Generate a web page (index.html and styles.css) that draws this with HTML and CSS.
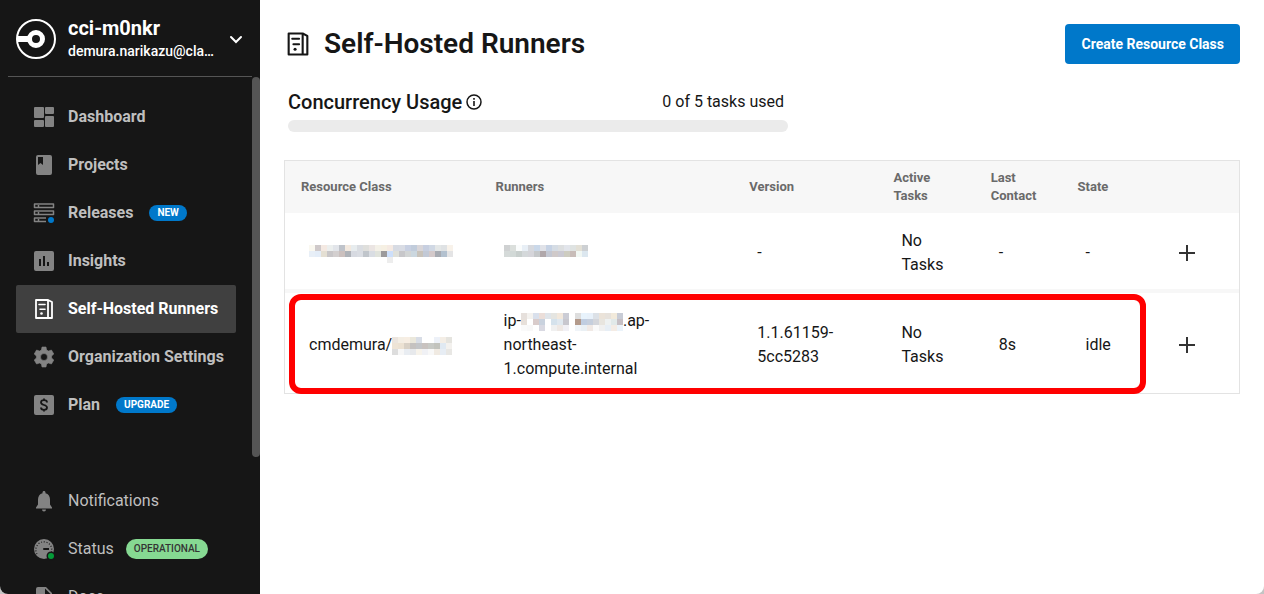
FILE: index.html
```html
<!DOCTYPE html>
<html lang="en">
<head>
  <meta charset="UTF-8">
  <meta name="viewport" content="width=device-width, initial-scale=1.0">
  <title>Self-Hosted Runners</title>
  <link rel="stylesheet" href="styles.css">
</head>
<body>
  <svg class="sprite" aria-hidden="true">
    <symbol id="icon-runner" viewBox="0 0 24 24">
      <path d="M4 3h12v18H4zM16 3l4 2v16h-4" fill="none" stroke="currentColor" stroke-width="1.800" stroke-linejoin="round"/>
      <path d="M7 7.500h6M8 12.200h5" fill="none" stroke="currentColor" stroke-width="1.600" stroke-linecap="round"/>
      <circle cx="9.500" cy="16.500" r="1.300" fill="currentColor"/>
    </symbol>
    <symbol id="icon-plus" viewBox="0 0 20 20">
      <path d="M10 2v16M2 10h16" fill="none" stroke="currentColor" stroke-width="2"/>
    </symbol>
  </svg>

  <div class="app">
    <aside class="sidebar">
      <button class="org">
        <svg class="org-logo" viewBox="0 0 40 40" aria-hidden="true">
          <circle cx="20" cy="20" r="19" fill="none" stroke="#fff" stroke-width="2"/>
          <circle cx="20" cy="20" r="6.500" fill="none" stroke="#fff" stroke-width="5"/>
          <path d="M1 17h11v6H1z" fill="#fff"/>
        </svg>
        <span class="org-text">
          <span class="org-name">cci-m0nkr</span>
          <span class="org-email">demura.narikazu@cla…</span>
        </span>
        <svg class="org-arrow" viewBox="0 0 16 16" aria-hidden="true"><path d="M3 6l5 5 5-5" fill="none" stroke="#fff" stroke-width="2" stroke-linecap="round"/></svg>
      </button>

      <div class="nav-wrap">
        <nav class="nav">
          <a href="#" class="nav-item">
            <svg class="icon" viewBox="0 0 24 24"><path fill="currentColor" d="M3 2h8a1 1 0 0 1 1 1v9a1 1 0 0 1-1 1H3a1 1 0 0 1-1-1V3a1 1 0 0 1 1-1zM3 15h8a1 1 0 0 1 1 1v5a1 1 0 0 1-1 1H3a1 1 0 0 1-1-1v-5a1 1 0 0 1 1-1zM14 2h7a1 1 0 0 1 1 1v5a1 1 0 0 1-1 1h-7a1 1 0 0 1-1-1V3a1 1 0 0 1 1-1zM14 11h7a1 1 0 0 1 1 1v9a1 1 0 0 1-1 1h-7a1 1 0 0 1-1-1v-9a1 1 0 0 1 1-1z"/></svg>
            <span>Dashboard</span>
          </a>
          <a href="#" class="nav-item">
            <svg class="icon" viewBox="0 0 24 24"><path fill="currentColor" fill-rule="evenodd" d="M6 2h12a2 2 0 0 1 2 2v16a2 2 0 0 1-2 2H6a2 2 0 0 1-2-2V4a2 2 0 0 1 2-2zM6 4v8l2.500-2 2.500 2V4z"/></svg>
            <span>Projects</span>
          </a>
          <a href="#" class="nav-item">
            <svg class="icon" viewBox="0 0 24 24">
              <path fill="none" stroke="currentColor" stroke-width="1.500" stroke-linejoin="round" d="M2.500 3h19v3.500h-19zM2.500 10h19v3.500h-19zM14 17H2.500v3.500H14M6.500 4v2M6.500 11v2M6.500 18v2"/>
              <circle cx="19" cy="19" r="3" fill="#0078ca"/>
            </svg>
            <span>Releases</span>
            <span class="badge">NEW</span>
          </a>
          <a href="#" class="nav-item">
            <svg class="icon" viewBox="0 0 24 24"><path fill="currentColor" fill-rule="evenodd" d="M4 2h16a2 2 0 0 1 2 2v16a2 2 0 0 1-2 2H4a2 2 0 0 1-2-2V4a2 2 0 0 1 2-2zM7 10v7h2v-7zM11 7v10h2V7zM15 13v4h2v-4z"/></svg>
            <span>Insights</span>
          </a>
          <a href="#" class="nav-item active">
            <svg class="icon"><use href="#icon-runner"/></svg>
            <span>Self-Hosted Runners</span>
          </a>
          <a href="#" class="nav-item">
            <svg class="icon" viewBox="0 0 24 24"><path fill="currentColor" fill-rule="evenodd" d="M10 2h4l.6 3 1.900 1.100 2.900-1.100 2.400 4-2.200 2v2l2.200 2-2.400 4-2.900-1-1.900 1-.6 3h-4l-.6-3-1.900-1-2.900 1-2.400-4 2.200-2v-2l-2.200-2 2.400-4 2.900 1.100L9.400 5zM12 8.500a3.500 3.500 0 1 0 0 7 3.500 3.500 0 0 0 0-7z" stroke="currentColor" stroke-linejoin="round" stroke-width=".6"/></svg>
            <span>Organization Settings</span>
          </a>
          <a href="#" class="nav-item">
            <svg class="icon" viewBox="0 0 24 24">
              <rect x="2" y="2" width="20" height="20" rx="2" fill="currentColor"/>
              <path d="M15 9.500c0-1.500-1.200-2.300-3-2.300s-3 .9-3 2.300c0 3.200 6 1.800 6 5 0 1.500-1.200 2.300-3 2.300s-3-.8-3-2.300M12 5.500v2M12 16.500v2" fill="none" stroke="#161616" stroke-width="1.800"/>
            </svg>
            <span>Plan</span>
            <span class="badge">UPGRADE</span>
          </a>
          <div class="nav-footer">
            <a href="#" class="nav-item light">
              <svg class="icon" viewBox="0 0 24 24"><path fill="currentColor" d="M12 2c.9 0 1.500.6 1.500 1.500v.7c3 .7 4.500 3.300 4.500 6.300v5l2 3v1H4v-1l2-3v-5c0-3 1.500-5.600 4.500-6.300v-.7C10.500 2.600 11.100 2 12 2zM10 20.500h4a2 2 0 0 1-4 0z"/></svg>
              <span>Notifications</span>
            </a>
            <a href="#" class="nav-item light">
              <svg class="icon" viewBox="0 0 24 24">
                <circle cx="12" cy="12" r="10" fill="currentColor"/>
                <path d="M5 17a8 8 0 1 1 14.500-2" fill="none" stroke="#161616" stroke-width="1.200" stroke-dasharray="1 1.800"/>
                <path d="M12 11h5v2h-5a1 1 0 0 1 0-2z" fill="#161616"/>
                <circle cx="19" cy="19" r="4.500" fill="#161616"/>
                <circle cx="19" cy="19" r="3" fill="#049b38"/>
              </svg>
              <span>Status</span>
              <span class="badge badge-ok">OPERATIONAL</span>
            </a>
            <a href="#" class="nav-item light">
              <svg class="icon" viewBox="0 0 24 24"><path fill="currentColor" fill-rule="evenodd" d="M6 2h8l6 6v12a2 2 0 0 1-2 2H6a2 2 0 0 1-2-2V4a2 2 0 0 1 2-2zM13 3.500V9h5.500z"/></svg>
              <span>Docs</span>
            </a>
          </div>
        </nav>
        <div class="scroll-thumb"></div>
      </div>
    </aside>

    <main class="main">
      <header class="page-header">
        <svg class="title-icon" aria-hidden="true"><use href="#icon-runner"/></svg>
        <h1>Self-Hosted Runners</h1>
        <button class="create-button">Create Resource Class</button>
      </header>

      <section class="usage">
        <div class="usage-row">
          <h2>Concurrency Usage</h2>
          <svg class="info" viewBox="0 0 16 16" aria-hidden="true"><circle cx="8" cy="8" r="7" fill="none" stroke="currentColor" stroke-width="1.500"/><path d="M7.200 7h1.600v5H7.200zM7.200 4h1.600v1.700H7.200z" fill="currentColor"/></svg>
          <span class="usage-count">0 of 5 tasks used</span>
        </div>
        <div class="usage-bar"></div>
      </section>

      <div class="table-wrap">
        <table class="runners">
          <colgroup>
            <col class="col-class"><col class="col-runners"><col class="col-version"><col class="col-tasks"><col class="col-contact"><col class="col-state"><col>
          </colgroup>
          <thead>
            <tr>
              <th>Resource Class</th>
              <th>Runners</th>
              <th>Version</th>
              <th>Active Tasks</th>
              <th>Last Contact</th>
              <th>State</th>
              <th></th>
            </tr>
          </thead>
          <tbody>
            <tr>
              <td><svg class="mosaic" data-mosaic="classA"></svg></td>
              <td><svg class="mosaic" data-mosaic="runnerA"></svg></td>
              <td>-</td>
              <td>No Tasks</td>
              <td>-</td>
              <td>-</td>
              <td><button class="expand" aria-label="Expand"><svg><use href="#icon-plus"/></svg></button></td>
            </tr>
            <tr>
              <td class="nowrap">cmdemura/<svg class="mosaic" data-mosaic="classB"></svg></td>
              <td>ip-<svg class="mosaic" data-mosaic="runnerB"></svg>.ap-<wbr>northeast-<wbr>1.compute.internal</td>
              <td>1.1.61159-<wbr>5cc5283</td>
              <td>No Tasks</td>
              <td>8s</td>
              <td>idle</td>
              <td><button class="expand" aria-label="Expand"><svg><use href="#icon-plus"/></svg></button></td>
            </tr>
          </tbody>
        </table>
        <div class="highlight"></div>
      </div>
    </main>
  </div>

  <script>
    // Rows of 6px blocks that hide the private names, "-" is an empty block
    const mosaics = {
      classA: [
        'faf8f0 cfc9ca f4e9e2 ecefee e2e5ea bfc3ca f3e9df e7ecee dadde2 dfdfdc ebe5e3 f4f1e8 f6f0e3 f5eae3 d7dbe3 d9dce4 c8d0e2 c1ccdb d9d6d9 c7cfe0 d0d8e4 e4e7e7 dfe2e4 f8f2ea',
        'e8eff7 e4edf8 e4dfd3 c8c6c8 d3cfcf cbc0be aeb2b8 d7dae1 dadde3 c0c5cb d9dde3 e0e3dc 9c9a9b cddffa dfe0da c7c7ca d2d5d5 cbd7df c8c3bb c2c9d6 d3c9ca a7abb2 b3c1cf e4e4e5',
        '- - - - - - - - - - - - - ededed'
      ],
      runnerA: [
        'cfd1d2 dbdfdc fafcfc e8eff6 d7d9de cad8e9 e0e2e8 c6d2e4 d5dce4 dddfe0 e2e5eb dfe3e2 e3e0d6 cdd0d3',
        'd5dad9 d2d9d7 c8cfcd d4d8da d5d5da c5c8ca b0a7aa c3c7d2 cfc9c9 cac9d2 cdccc0 c8bcb8 f1f7f3 dce7ef',
        '-'
      ],
      classB: [
        'ece5de f4eee4 f7eee3 ebe8dc d8dde6 - - edf1f8 f4eee6 e5e4df',
        'eee4d6 ece2d3 d9d1c6 c5c2c0 c3c5c8 c8c2bf c7c9c5 c2c3bd e0e9f2 f3f1ee',
        'dddddd f7f7f7 e9edf2 e7e9ec f7f3eb f0f1f5 f8f8f8 f0eae2 e7edf4 e8e7e4'
      ],
      runnerB: [
        'e6e0dc f4f2ef d9e0ec ebded9 e0e5ea e5e5e1 f2e8dc cbccd5 - dedede e8f3fc e8f1fa dce1e7 ebe3d9 e7e2dc f2eadb c8ccd6',
        'e7e0da - d9cccb c9d2de - d5e2ec e0e8ef c8c7ce - b39a8b c0cde0 c6cfdd d4d6db e8e5df eef1f1 e1e9e9 c6bfc4',
        'fafafa f8f8f8 - d9d9e2 - f0f0f0 eee8e4 f1f0f5 - f0f4f8 eaf0f4 f0e9e5 fafafa f0f0f0 e7eef5 f4ece5 ebf3fa'
      ]
    };

    document.querySelectorAll('.mosaic').forEach((svg) => {
      const rows = mosaics[svg.dataset.mosaic].map((row) => row.split(' '));
      svg.setAttribute('width', rows[0].length * 6);
      svg.setAttribute('height', 18);
      rows.forEach((row, y) => {
        row.forEach((color, x) => {
          if (color === '-') return;
          const rect = document.createElementNS('http://www.w3.org/2000/svg', 'rect');
          rect.setAttribute('x', x * 6);
          rect.setAttribute('y', y * 6);
          rect.setAttribute('width', 6);
          rect.setAttribute('height', 6);
          rect.setAttribute('fill', '#' + color);
          svg.appendChild(rect);
        });
      });
    });
  </script>
</body>
</html>
```

FILE: styles.css
```css
* {
  box-sizing: border-box;
}
body {
  margin: 0;
  background: #c4c4c4;
  color: #161616;
  font-family: Roboto, Arial, sans-serif;
  font-size: 16px;
  line-height: 24px;
}
button {
  border: none;
  font-family: inherit;
  cursor: pointer;
}
.sprite {
  display: none;
}
.app {
  display: flex;
  height: 100vh;
  overflow: hidden;
  background: #fff;
  border-radius: 0 0 8px 8px;
}

/* Sidebar */
.sidebar {
  display: flex;
  flex-direction: column;
  flex: none;
  width: 260px;
  background: #161616;
}
.org {
  display: flex;
  align-items: center;
  gap: 12px;
  margin: 0 8px;
  padding: 16px 8px 14px;
  background: none;
  border-bottom: 1px solid #555;
  color: #fff;
  text-align: left;
}
.org-logo {
  flex: none;
  width: 40px;
  height: 40px;
}
.org-text {
  flex: 1;
  min-width: 0;
}
.org-name,
.org-email {
  display: block;
  white-space: nowrap;
}
.org-name {
  font-size: 20px;
  font-weight: 700;
  line-height: 24px;
}
.org-email {
  font-size: 14px;
  font-weight: 500;
  line-height: 22px;
}
.org-arrow {
  flex: none;
  width: 16px;
  height: 16px;
}
.nav-wrap {
  position: relative;
  flex: 1;
  min-height: 0;
}
.nav {
  height: 100%;
  padding: 16px 24px 0 16px;
  overflow: hidden;
}
.scroll-thumb {
  position: absolute;
  top: 0;
  right: 0;
  width: 8px;
  height: 73.5%;
  background: #555;
  border-radius: 4px;
}
.nav-item {
  display: flex;
  align-items: center;
  height: 48px;
  padding: 0 16px;
  border-radius: 2px;
  color: #bfbfbf;
  font-weight: 700;
  text-decoration: none;
  white-space: nowrap;
}
.nav-item .icon {
  flex: none;
  width: 24px;
  height: 24px;
  margin-right: 12px;
  color: #838383;
}
.nav-item.active {
  background: #404040;
  color: #fff;
}
.nav-item.active .icon {
  color: #fff;
}
.nav-item.light {
  font-weight: 400;
}
.nav-footer {
  padding-top: 48px;
}
.badge {
  margin-left: 16px;
  padding: 0 8px;
  background: #0078ca;
  border-radius: 10px;
  color: #fff;
  font-size: 10px;
  font-weight: 700;
  line-height: 16px;
}
.badge-ok {
  margin-left: 12px;
  background: #86d992;
  color: #343434;
  font-weight: 500;
  line-height: 20px;
}

/* Page */
.main {
  flex: 1;
  min-width: 0;
  padding: 24px;
}
.page-header {
  display: flex;
  align-items: center;
}
.title-icon {
  width: 28px;
  height: 28px;
  margin-right: 12px;
}
h1 {
  margin: 0;
  font-size: 28px;
  font-weight: 600;
  line-height: 40px;
}
.create-button {
  height: 40px;
  margin-left: auto;
  padding: 0 16px;
  background: #0078ca;
  border-radius: 4px;
  color: #fff;
  font-size: 14px;
  font-weight: 700;
}
.usage {
  max-width: 500px;
  margin: 24px 4px 28px;
}
.usage-row {
  display: flex;
  align-items: center;
  height: 28px;
  margin-bottom: 4px;
  padding-right: 4px;
}
h2 {
  margin: 0 4px 0 0;
  font-size: 20px;
  font-weight: 500;
}
.info {
  width: 16px;
  height: 16px;
}
.usage-count {
  margin-left: auto;
}
.usage-bar {
  height: 12px;
  background: #ebebeb;
  border-radius: 6px;
}

/* Runners table */
.table-wrap {
  position: relative;
  border: 1px solid #e3e3e3;
}
.runners {
  width: 100%;
  border-collapse: collapse;
  table-layout: fixed;
}
.col-class { width: 20.4%; }
.col-runners { width: 26.6%; }
.col-version { width: 15.1%; }
.col-tasks { width: 10.2%; }
.col-contact { width: 9.1%; }
.col-state { width: 9.6%; }
.runners th {
  padding: 8px 16px;
  background: #f7f7f7;
  color: #6a6a6a;
  font-size: 13px;
  font-weight: 700;
  line-height: 18px;
  text-align: left;
}
.runners td {
  padding: 16px 24px 12px;
}
.runners tbody tr + tr td {
  border-top: 4px solid #f7f7f7;
}
.nowrap {
  white-space: nowrap;
}
.mosaic {
  vertical-align: middle;
}
.expand {
  display: block;
  padding: 0;
  background: none;
  color: #333;
}
.expand svg {
  display: block;
  width: 20px;
  height: 20px;
}
.highlight {
  position: absolute;
  right: 93px;
  bottom: -1px;
  left: 4px;
  height: 100px;
  border: 6px solid #f00;
  border-radius: 12px;
  pointer-events: none;
}
```
